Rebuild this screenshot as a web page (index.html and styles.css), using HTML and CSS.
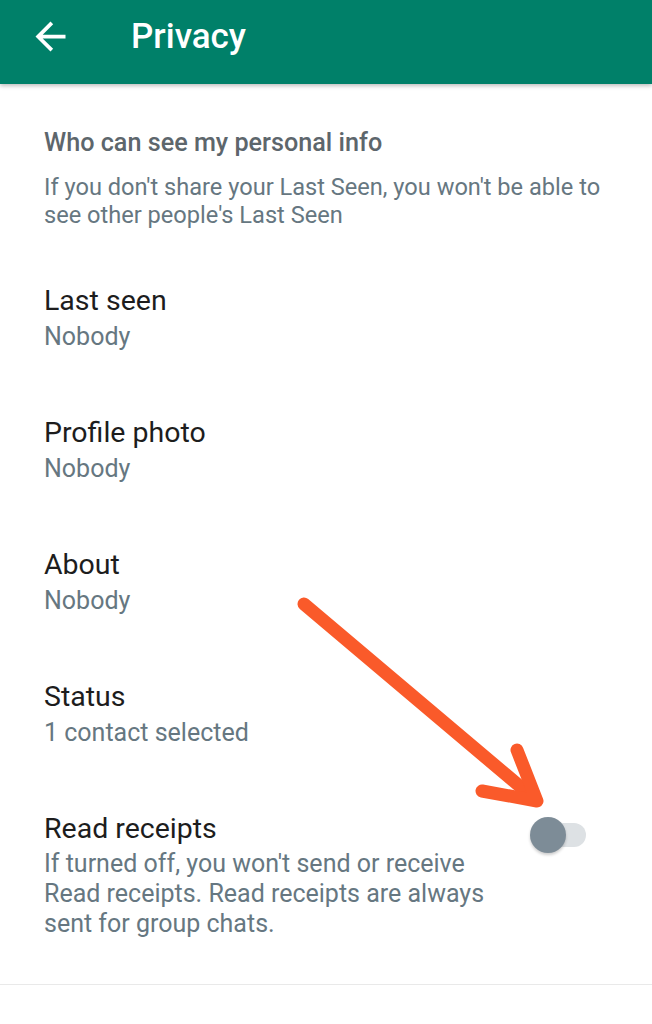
FILE: index.html
```html
<!DOCTYPE html>
<html lang="en">
<head>
    <meta charset="UTF-8">
    <meta name="viewport" content="width=device-width, initial-scale=1.0">
    <title>Privacy</title>
    <link rel="stylesheet" href="styles.css">
</head>
<body>
    <header class="topbar">
        <svg class="back" viewBox="0 0 24 24" width="45" height="45">
            <path d="M20 11H7.83l5.59-5.59L12 4l-8 8 8 8 1.41-1.41L7.83 13H20v-2z" fill="#fff"/>
        </svg>
        <h1>Privacy</h1>
    </header>
    <main class="content">
        <section class="intro">
            <h2>Who can see my personal info</h2>
            <p>If you don't share your Last Seen, you won't be able to see other people's Last Seen</p>
        </section>
        <div class="item">
            <div class="item-title">Last seen</div>
            <div class="item-sub">Nobody</div>
        </div>
        <div class="item">
            <div class="item-title">Profile photo</div>
            <div class="item-sub">Nobody</div>
        </div>
        <div class="item">
            <div class="item-title">About</div>
            <div class="item-sub">Nobody</div>
        </div>
        <div class="item">
            <div class="item-title">Status</div>
            <div class="item-sub">1 contact selected</div>
        </div>
        <div class="item item-switch">
            <div class="item-text">
                <div class="item-title">Read receipts</div>
                <div class="item-desc">If turned off, you won't send or receive Read receipts. Read receipts are always sent for group chats.</div>
            </div>
            <div class="toggle">
                <span class="track"></span>
                <span class="knob"></span>
            </div>
        </div>
        <div class="divider"></div>

        <!-- annotation arrow drawn over the screenshot -->
        <svg class="arrow" width="652" height="1024" viewBox="0 0 652 1024">
            <g stroke="#fa5a2a" stroke-width="13" stroke-linecap="round" stroke-linejoin="round" fill="none">
                <line x1="304" y1="604" x2="536" y2="800"/>
                <polyline points="517,750 537,801 482,791"/>
            </g>
        </svg>
    </main>
</body>
</html>
```

FILE: styles.css
```css
body {
    font-family: Roboto, "Noto Sans", sans-serif;
    margin: 0;
    padding: 0;
    background-color: #fff;
    width: 652px;
    height: 1024px;
    overflow: hidden;
    position: relative;
}

.topbar {
    background-color: #008069;
    height: 84px;
    display: flex;
    align-items: center;
    box-shadow: 0 2px 4px rgba(0, 0, 0, 0.25);
    position: relative;
    z-index: 1;
}

.back {
    margin-left: 28px;
    margin-top: -12px;
}

.topbar h1 {
    margin: -12px 0 0 58px;
    color: #fff;
    font-size: 35px;
    font-weight: 500;
}

.content {
    padding: 0 36px 0 44px;
}

.intro {
    padding-top: 44px;
    padding-bottom: 24px;
}

.intro h2 {
    margin: 0;
    font-size: 25.2px;
    line-height: 30px;
    font-weight: 500;
    color: #5d666c;
}

.intro p {
    margin: 15px 0 0;
    font-size: 23.6px;
    line-height: 28px;
    color: #667781;
}

.item {
    padding: 30px 0;
}

.item-title {
    font-size: 28.5px;
    line-height: 36px;
    color: #1d1d1d;
}

.item-sub {
    font-size: 25px;
    line-height: 36px;
    color: #667781;
}

.item-switch {
    display: flex;
    padding-bottom: 45px;
}

.item-text {
    width: 470px;
}

.item-desc {
    margin-top: 2px;
    font-size: 25px;
    line-height: 30px;
    color: #667781;
}

.toggle {
    position: relative;
    width: 56px;
    height: 40px;
    margin-left: 16px;
    margin-top: 4px;
}

.track {
    position: absolute;
    left: 6px;
    right: 0;
    top: 8px;
    height: 24px;
    border-radius: 12px;
    background-color: #dde1e4;
}

.knob {
    position: absolute;
    left: 0;
    top: 2px;
    width: 36px;
    height: 36px;
    border-radius: 50%;
    background-color: #7d8c97;
    box-shadow: 0 2px 3px rgba(0, 0, 0, 0.2);
}

.divider {
    height: 1px;
    background-color: #e9e9e9;
    margin: 0 -36px 0 -44px;
}

.arrow {
    position: absolute;
    left: 0;
    top: 0;
    pointer-events: none;
}
```
